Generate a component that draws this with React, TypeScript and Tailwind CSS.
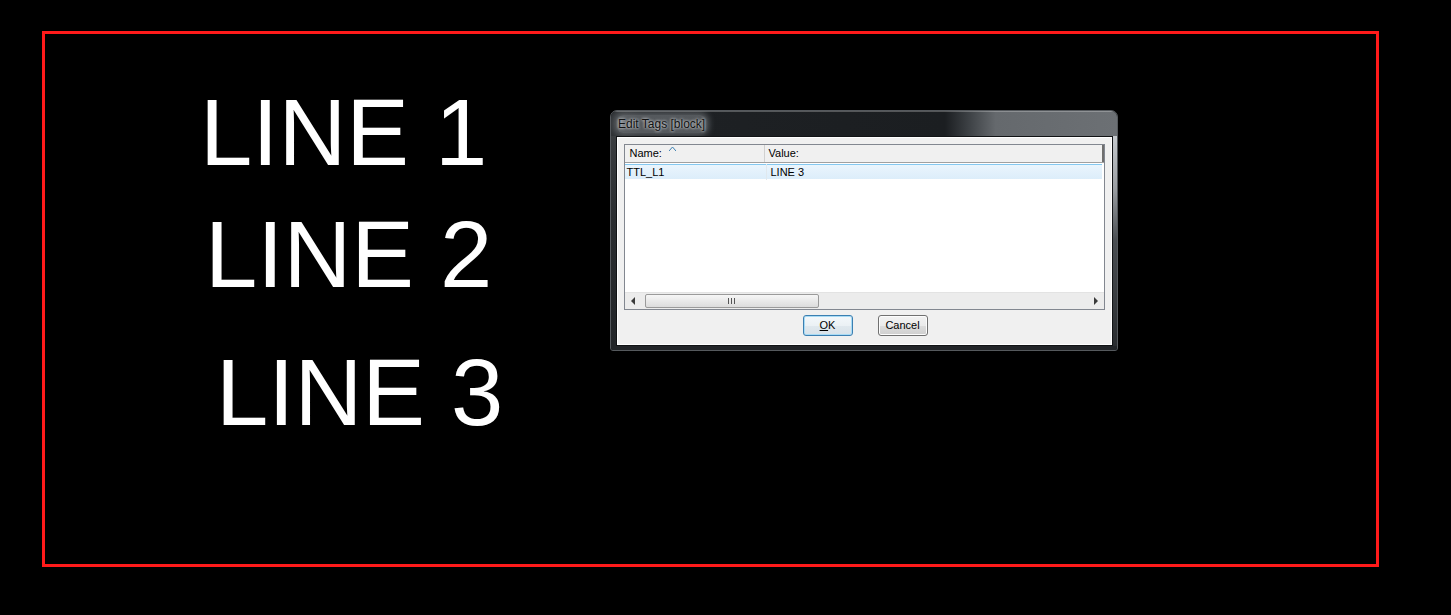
import React from 'react';

const ui = { fontFamily: '"Liberation Sans", Arial, sans-serif' };

function ScrollArrow({ dir }: { dir: 'left' | 'right' }) {
  return (
    <div className="flex h-full w-[17px] items-center justify-center">
      <svg width="5" height="8" viewBox="0 0 5 8">
        {dir === 'left' ? (
          <path d="M4 0 L0 4 L4 8 Z" fill="#3a3a3a" />
        ) : (
          <path d="M1 0 L5 4 L1 8 Z" fill="#3a3a3a" />
        )}
      </svg>
    </div>
  );
}

function EditTagsDialog() {
  return (
    <div
      className="flex h-[241px] w-[508px] flex-col overflow-hidden rounded-t-[7px] rounded-b-[3px] border border-[#55595d] bg-[#1b1e21]"
      style={ui}
    >
      {/* title bar */}
      <div className="flex h-[25px] shrink-0 items-center bg-[linear-gradient(to_right,#2e3134_0%,#1e2124_6%,#1b1e21_66%,#3f4347_71%,#65696d_76%,#6c7074_100%)] pl-[6px] pt-[1px] shadow-[inset_0_1px_0_rgba(255,255,255,0.25)]">
        <span className="rounded-[6px] bg-[rgba(190,195,200,0.35)] px-[1px] text-[12px] text-[#121212] shadow-[0_0_6px_3px_rgba(190,195,200,0.35)] [text-shadow:0_0_3px_#c4c8cc,0_0_3px_#c4c8cc]">
          Edit Tags [block]
        </span>
      </div>

      <div className="flex flex-1">
        {/* left frame */}
        <div className="w-[5px] bg-[linear-gradient(#3a3d40,#2a2d30_40%,#222528)]" />

        {/* client area */}
        <div className="flex flex-1 flex-col border border-[#111315] bg-[#f0f0f0] px-[7px] pt-[7px] shadow-[inset_1px_1px_0_#ffffff,inset_-1px_-1px_0_#ffffff]">
          {/* list view */}
          <div className="flex h-[166px] w-[481px] flex-col border border-[#828790] bg-white">
            {/* header */}
            <div className="flex h-[18px] border-b border-[#a0a0a0] bg-[#f0f0f0] text-[11px] text-black">
              <div className="relative flex w-[140px] items-center border-r border-[#d0d0d0] pl-[5px]">
                Name:
                <svg className="absolute left-[44px] top-[2px]" width="7" height="4" viewBox="0 0 7 4">
                  <path d="M0 4 L3.5 0 L7 4" fill="none" stroke="#3c7fb1" strokeWidth="1" />
                </svg>
              </div>
              <div className="flex flex-1 items-center border-r-2 border-r-[#6f6f6f] pl-[4px]">
                Value:
              </div>
            </div>
            {/* selected row */}
            <div className="mt-px flex h-[15px] w-[477px] items-center border-t border-[#84c8f0] bg-[linear-gradient(#eaf5fd,#dcedfa)] text-[11px] text-black">
              <div className="w-[141px] pl-[2px]">TTL_L1</div>
              <div className="flex-1 border-l border-[#e0e8ee] pl-[4px]">LINE 3</div>
            </div>
            <div className="flex-1" />
            {/* horizontal scrollbar */}
            <div className="flex h-[17px] items-center border-t border-[#e3e3e3] bg-[#ececec]">
              <ScrollArrow dir="left" />
              <div className="ml-[3px] flex h-[14px] w-[174px] items-center justify-center gap-[2px] rounded-[2px] border border-[#9a9a9a] bg-[linear-gradient(#f6f6f6,#dcdcdc)]">
                <span className="h-[6px] w-px bg-[#555]" />
                <span className="h-[6px] w-px bg-[#555]" />
                <span className="h-[6px] w-px bg-[#555]" />
              </div>
              <div className="flex-1" />
              <ScrollArrow dir="right" />
            </div>
          </div>

          {/* buttons */}
          <div className="mt-[5px] flex justify-center gap-[25px] pl-[2px]">
            <div className="flex h-[21px] w-[50px] items-center justify-center rounded-[3px] border border-[#3c7fb1] bg-[linear-gradient(#f4f8fb_0%,#ebf1f5_50%,#e0e8ee_51%,#d8e2e9_100%)] text-[11px] text-black shadow-[inset_0_0_0_1px_#a8dbf5]">
              <span>
                <span className="underline underline-offset-1">O</span>K
              </span>
            </div>
            <div className="flex h-[21px] w-[50px] items-center justify-center rounded-[3px] border border-[#707070] bg-[linear-gradient(#f2f2f2_0%,#ebebeb_50%,#dddddd_51%,#cfcfcf_100%)] text-[11px] text-black shadow-[inset_0_0_0_1px_#fcfcfc]">
              Cancel
            </div>
          </div>
        </div>

        {/* right frame with reflection */}
        <div className="w-[5px] bg-[linear-gradient(#c4c8cc_0%,#9a9ea2_25%,#4a4e52_50%,#2a2d30_100%)]" />
      </div>

      {/* bottom frame */}
      <div className="h-[4px] shrink-0 bg-[#222528]" />
    </div>
  );
}

export default function App() {
  return (
    <div className="h-[615px] w-[1451px] overflow-hidden bg-black pl-[42px] pt-[31px]">
      <div className="flex h-[536px] w-[1337px] border-[3px] border-[#ff1a1a]">
        {/* drawing text */}
        <div
          className="flex w-[565px] shrink-0 flex-col pl-[155px] pt-[52px] text-[94px] leading-[94px] text-white"
          style={ui}
        >
          <div>LINE 1</div>
          <div className="ml-[5px] mt-[28px]">LINE 2</div>
          <div className="ml-[16px] mt-[44px]">LINE 3</div>
        </div>

        {/* dialog */}
        <div className="pt-[76px]">
          <EditTagsDialog />
        </div>
      </div>
    </div>
  );
}
